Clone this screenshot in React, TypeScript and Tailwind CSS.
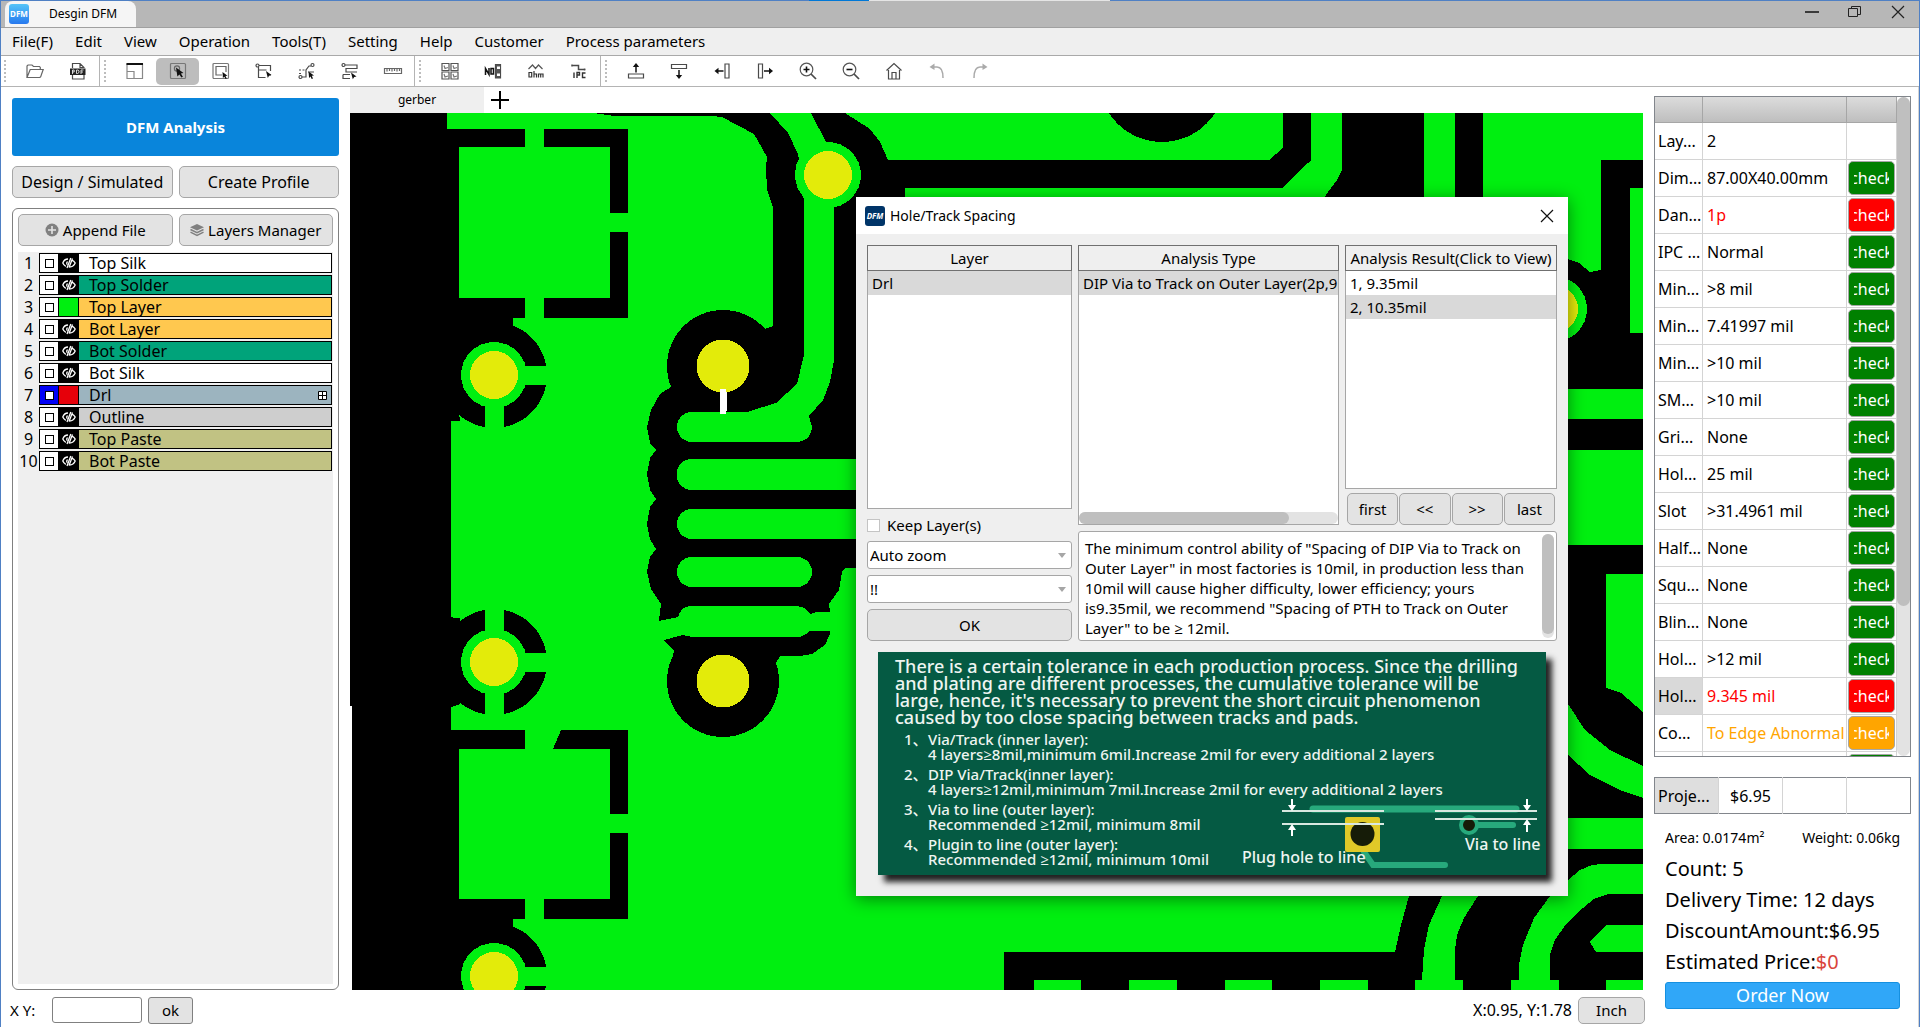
import React, { useState } from 'react';

type IconProps = { children: React.ReactNode };

const Icon: React.FC<IconProps> = ({ children }) => (
  <svg width="20" height="20" viewBox="0 0 20 20" fill="none" stroke="#4a4a4a" strokeWidth="1.2" aria-hidden="true">
    {children}
  </svg>
);

const toolGroups = [
  [
    { id: 'Open', icon: <Icon><path d="M2 16.500V5l1-1h4l1.500 1.500h6l.8 1v2M2 16.500l3.200-8h13l-2.500 7.200-.8.8z" stroke="#666" /></Icon> },
    {
      id: 'Export PDF',
      icon: (
        <Icon>
          <path d="M4.500 7V2.500h7.500l4 4V7M4.500 14v4h11.500v-4M12 2.500v4h4" />
          <rect x="2" y="7.500" width="15.500" height="6.500" fill="#222" stroke="none" />
          <path d="M4.500 13V9h1.700v2H4.500M8.500 9v3.500h1L11 11.500V10l-.8-1zM13 13V9h2.500M13 11h2" stroke="#fff" strokeWidth=".8" />
        </Icon>
      ),
    },
  ],
  [
    { id: 'Layout', icon: <Icon><path d="M2 17.500V3h15.500v14.500zM2 10.500h7v7" stroke="#888" /><path d="M1.500 3h16.500" stroke="#111" strokeWidth="2" /></Icon> },
    {
      id: 'Select',
      active: true,
      icon: (
        <Icon>
          <rect x="2.500" y="2.500" width="15" height="15" rx="1" stroke="#777" />
          <circle cx="9" cy="7.500" r="2.600" stroke="#666" />
          <path d="M8 6.500l7.500 5.500-2.600.5 2 3.200-1.500.8-2-3-2 2z" fill="#111" stroke="none" />
        </Icon>
      ),
    },
    {
      id: 'Area select',
      icon: (
        <Icon>
          <rect x="2" y="2.500" width="15.500" height="15" rx="1" stroke="#777" />
          <path d="M11 14H5V5.500h10V11" stroke="#666" />
          <path d="M11.500 11l5 3.800-2 .3 1.300 2.300-1.200.6-1.300-2.300-1.400 1.300z" fill="#111" stroke="none" />
        </Icon>
      ),
    },
    {
      id: 'Net select',
      icon: (
        <Icon>
          <circle cx="3.500" cy="4.500" r="1.500" />
          <path d="M5 4.500h11.500v5.500M15 14h2M4.500 6v3M4.500 9h8M4.500 9v7.500h7" />
          <path d="M12 10l5.500 4-2.300.5-1.400 2.500z" fill="#111" stroke="none" />
        </Icon>
      ),
    },
    {
      id: 'Trace',
      icon: (
        <Icon>
          <path d="M5 16h4V9l3-4h2M2 9h2M5.500 9h2M2 12.500h2M11 11h6" />
          <circle cx="15.500" cy="4" r="1.500" />
          <circle cx="3.500" cy="16" r="1.500" />
          <path d="M11.500 10.500l5.500 4-2.200.3 1.200 2.700-1.300.5-1.200-2.500-1.400 1.500z" fill="#111" stroke="none" />
        </Icon>
      ),
    },
    {
      id: 'Lines',
      icon: (
        <Icon>
          <circle cx="3.500" cy="4" r="1.500" />
          <path d="M5 4h12v3.500H6V11h11M3 13.500h7M3 13.500v4h7" />
          <path d="M11 11.500l5.500 4-2.300.4-1.400 2.300z" fill="#111" stroke="none" />
        </Icon>
      ),
    },
    { id: 'Ruler', icon: <Icon><path d="M1.500 7.500h17v5h-17zM4 8v2.500M6.500 8v2M9 8v2.500M11.500 8v2M14 8v2.500M16.500 8v2" stroke="#666" /></Icon> },
  ],
  [
    {
      id: 'Panelize',
      icon: (
        <Icon>
          <path d="M2 2.500h7v7H2zM11 2.500h7v7h-7zM2 11h7v7H2zM11 11h7v7h-7z" stroke="#555" />
          <path d="M4 4.500l1 3 3-1M13 4.500l1 3 3-1M4 13l1 3 3-1M13 13l1 3 3-1" stroke="#777" />
        </Icon>
      ),
    },
    {
      id: 'Numbering',
      icon: (
        <Icon>
          <path d="M2.500 14V7.500l3.500 6V7M8 7.500h2.500V13H8z" stroke="#111" strokeWidth="1.500" />
          <path d="M12.500 3.500h5v13.500h-5z" fill="#555" />
          <path d="M14 5.500h3v2.500h-3zM14 12.500h3V15h-3z" fill="#fff" stroke="none" />
        </Icon>
      ),
    },
    {
      id: 'Impedance',
      icon: (
        <Icon>
          <path d="M2.500 8l4-4 3 3.500 3-3.500 4 4" stroke="#555" />
          <path d="M3 11.500h2.700V16H3zM8 10v6.500M8 13h2.500v3.500M12.500 16.500V13h4.500v3.500M14.700 13v3.500" stroke="#333" />
        </Icon>
      ),
    },
    {
      id: 'IPC',
      icon: (
        <Icon>
          <path d="M2.500 4.500h7v4h7M3 3.500v2M15.500 7.500v2" strokeWidth="1.500" />
          <path d="M5 11.500V17M8 17v-5.500h2.500V14H8M16.500 12h-3v4.500h3" stroke="#333" strokeWidth="1.400" />
        </Icon>
      ),
    },
  ],
  [
    { id: 'Align top', icon: <Icon><path d="M2.500 13h15v4h-15z" /><path d="M10 11.500V4" stroke="#111" strokeWidth="1.500" /><path d="M10 2L6.800 6h6.400z" fill="#111" stroke="none" /></Icon> },
    { id: 'Align bottom', icon: <Icon><path d="M2.500 3.500h15v4h-15z" /><path d="M10 9v6" stroke="#111" strokeWidth="1.500" /><path d="M10 18l-3.200-4h6.400z" fill="#111" stroke="none" /></Icon> },
    { id: 'Align left', icon: <Icon><path d="M13 3h4v14h-4z" /><path d="M11.500 10H5" stroke="#111" strokeWidth="1.500" /><path d="M2.500 10L6.500 6.800v6.400z" fill="#111" stroke="none" /></Icon> },
    { id: 'Align right', icon: <Icon><path d="M3.500 3h4v14h-4z" /><path d="M9 10h6" stroke="#111" strokeWidth="1.500" /><path d="M18 10l-4-3.200v6.400z" fill="#111" stroke="none" /></Icon> },
    { id: 'Zoom in', icon: <Icon><circle cx="8.500" cy="8.500" r="6.300" stroke="#555" /><path d="M13 13l5 5" strokeWidth="1.700" /><path d="M5.500 8.500h6M8.500 5.500v6" stroke="#111" strokeWidth="1.600" /></Icon> },
    { id: 'Zoom out', icon: <Icon><circle cx="8.500" cy="8.500" r="6.300" stroke="#555" /><path d="M13 13l5 5" strokeWidth="1.700" /><path d="M5.500 8.500h6" stroke="#111" strokeWidth="1.600" /></Icon> },
    { id: 'Home', icon: <Icon><path d="M2.500 9.500L10 2.500l7.500 7M4.500 9v9h11V9M8 18v-6.500h4V18" /></Icon> },
    { id: 'Undo', icon: <Icon><path d="M5 6h5c3.500 0 6 3.500 6 11" stroke="#aaa" strokeWidth="1.500" /><path d="M2.500 6L7.500 2.500v6.500z" fill="#aaa" stroke="none" /></Icon> },
    { id: 'Redo', icon: <Icon><path d="M15 6h-5c-3.500 0-6 3.500-6 11" stroke="#aaa" strokeWidth="1.500" /><path d="M17.500 6L12.500 2.500v6.500z" fill="#aaa" stroke="none" /></Icon> },
  ],
];

const menus = ['File(F)', 'Edit', 'View', 'Operation', 'Tools(T)', 'Setting', 'Help', 'Customer', 'Process parameters'];

const layers = [
  { name: 'Top Silk', bg: 'bg-white', swatch: '' },
  { name: 'Top Solder', bg: 'bg-[#00a37a]', swatch: '' },
  { name: 'Top Layer', bg: 'bg-[#ffc84f]', swatch: 'bg-[#00ef10]' },
  { name: 'Bot Layer', bg: 'bg-[#ffc84f]', swatch: '' },
  { name: 'Bot Solder', bg: 'bg-[#00a37a]', swatch: '' },
  { name: 'Bot Silk', bg: 'bg-white', swatch: '' },
  { name: 'Drl', bg: 'bg-[#9cb4bf]', swatch: 'bg-[#e6000a]' },
  { name: 'Outline', bg: 'bg-[#cecece]', swatch: '' },
  { name: 'Top Paste', bg: 'bg-[#c1c283]', swatch: '' },
  { name: 'Bot Paste', bg: 'bg-[#c1c283]', swatch: '' },
];

const results = [
  { name: 'Lay...', value: '2', state: '' },
  { name: 'Dim...', value: '87.00X40.00mm', state: 'ok' },
  { name: 'Dan...', value: '1p', state: 'error' },
  { name: 'IPC ...', value: 'Normal', state: 'ok' },
  { name: 'Min...', value: '>8 mil', state: 'ok' },
  { name: 'Min...', value: '7.41997 mil', state: 'ok' },
  { name: 'Min...', value: '>10 mil', state: 'ok' },
  { name: 'SM...', value: '>10 mil', state: 'ok' },
  { name: 'Gri...', value: 'None', state: 'ok' },
  { name: 'Hol...', value: '25 mil', state: 'ok' },
  { name: 'Slot', value: '>31.4961 mil', state: 'ok' },
  { name: 'Half...', value: 'None', state: 'ok' },
  { name: 'Squ...', value: 'None', state: 'ok' },
  { name: 'Blin...', value: 'None', state: 'ok' },
  { name: 'Hol...', value: '>12 mil', state: 'ok' },
  { name: 'Hol...', value: '9.345 mil', state: 'error', selected: true },
  { name: 'Co...', value: 'To Edge Abnormal', state: 'warn' },
];

const stateBg: Record<string, string> = { ok: 'bg-[#008000]', error: 'bg-[#ff0000]', warn: 'bg-[#ffa500]' };
const stateText: Record<string, string> = { ok: 'text-black', error: 'text-[#ff0000]', warn: 'text-[#ffa500]' };

const btn = 'flex items-center justify-center rounded-[5px] border border-[#a6a6a6] bg-[#e3e3e3]';

const TitleBar = () => (
  <header className="flex h-[27px] items-stretch border-b border-[#a0a0a0] bg-[#b7b7b7]">
    <div className="ml-1 flex w-[131px] items-center rounded-t-lg bg-[#f5f5f5] pb-px pl-1">
      <span className="flex size-5 items-center justify-center rounded-[3px] bg-linear-to-b from-[#55c4f7] to-[#2878ee] text-[8px] font-bold text-white">DFM</span>
      <span className="ml-5 text-[12px]">Desgin DFM</span>
    </div>
    <div className="ml-auto flex pb-1">
      <button aria-label="Minimize" className="flex w-[43px] items-center justify-center">
        <svg width="14" height="14" stroke="#111" strokeWidth="1.500"><path d="M0 7h14" /></svg>
      </button>
      <button aria-label="Restore" className="flex w-[43px] items-center justify-center">
        <svg width="14" height="14" fill="none" stroke="#222"><path d="M.5 3.500h9v8h-9zM3.500 3.500v-2h9v8h-3" /></svg>
      </button>
      <button aria-label="Close" className="flex w-[43px] items-center justify-center">
        <svg width="14" height="14" stroke="#222" strokeWidth="1.200"><path d="M1 1l12 12M13 1L1 13" /></svg>
      </button>
    </div>
  </header>
);

const Toolbar = () => (
  <div className="flex h-[31px] border-b border-[#b4b4b4] bg-white">
    {toolGroups.map((group, i) => (
      <div key={i} className={`flex items-center ${i === 0 ? 'pl-[3px]' : 'pl-1'} ${i < 3 ? 'border-r border-[#b4b4b4]' : ''}`}>
        <span className="mr-[7px] h-[22px] border-l-2 border-dotted border-[#bdbdbd]" />
        {group.map((tool) => (
          <button
            key={tool.id}
            aria-label={tool.id}
            className={`flex h-[27px] w-[43px] items-center justify-center rounded-[5px] ${'active' in tool ? 'bg-[#bdbdbd]' : ''}`}
          >
            {tool.icon}
          </button>
        ))}
      </div>
    ))}
  </div>
);

const HiddenEye = () => (
  <svg width="14" height="12" viewBox="0 0 14 12" fill="none" stroke="#fff" strokeWidth="1.300" aria-hidden="true">
    <path d="M6 2C3.500 2 1.500 4 .8 6c.6 1.400 1.700 2.700 3 3.300M9.500 2.800C11.300 3.500 12.600 4.700 13.200 6c-.9 2-3 4-5.700 4M5.500 4.500c-1 1-1 2.300-.3 3.200M8.800 1L5 11M10.500 1.500L7 10.500" />
  </svg>
);

const LayerPanel = () => {
  const [active, setActive] = useState(6);

  return (
    <aside className="flex w-[349px] shrink-0 flex-col px-[11px] pt-[11px] text-[16px]">
      <button className="h-[58px] rounded-[3px] bg-[#0985db] text-[15px] font-bold text-white">DFM Analysis</button>
      <div className="mt-[10px] grid grid-cols-2 gap-[6px]">
        <button className={`${btn} h-8 whitespace-nowrap`}>Design / Simulated</button>
        <button className={`${btn} h-8 whitespace-nowrap`}>Create Profile</button>
      </div>
      <div className="mt-[10px] flex flex-1 flex-col rounded-md border border-[#808080] p-[5px]">
        <div className="grid grid-cols-2 gap-[6px] text-[15px]">
          <button className={`${btn} h-8 gap-1`}>
            <svg width="14" height="14" viewBox="0 0 14 14"><circle cx="7" cy="7" r="6.500" fill="#808080" /><path d="M7 3v8M3 7h8" stroke="#e3e3e3" strokeWidth="1.600" /></svg>
            Append File
          </button>
          <button className={`${btn} h-8 gap-1`}>
            <svg width="14" height="14" viewBox="0 0 14 14"><path d="M7 1l7 3.300-7 3.300-7-3.300z" fill="#808080" /><path d="M.5 6.500L7 9.700l6.500-3.200M.5 9.200L7 12.400l6.500-3.200" fill="none" stroke="#808080" strokeWidth="1.500" /></svg>
            Layers Manager
          </button>
        </div>
        <ul className="mt-[6px] flex-1 space-y-[2px] bg-[#efefef] pt-px pr-px">
          {layers.map((layer, i) => (
            <li key={layer.name} className="flex h-5 items-center" onClick={() => setActive(i)}>
              <span className="flex w-[21px] justify-center">{i + 1}</span>
              <div className={`flex h-5 flex-1 items-stretch border border-black ${layer.bg}`}>
                <span className={`flex w-[19px] items-center justify-center border-r border-black ${active === i ? 'bg-[#0000f5]' : 'bg-white'}`}>
                  <input
                    type="checkbox"
                    aria-label={layer.name}
                    className="size-[9px] appearance-none border border-black bg-white"
                  />
                </span>
                <span className={`flex w-5 items-center justify-center border-r border-black ${layer.swatch || 'bg-black'}`}>
                  {!layer.swatch && <HiddenEye />}
                </span>
                <span className="flex flex-1 items-center pl-[10px]">{layer.name}</span>
                {active === i && (
                  <svg width="9" height="9" className="mr-1 self-center" fill="#fff" stroke="#000"><path d="M.5.5h8v8h-8zM4.500.5v8M.5 4.500h8" /></svg>
                )}
              </div>
            </li>
          ))}
        </ul>
      </div>
    </aside>
  );
};

// thermal relief via: clearance ring, pad and drill, spokes to the right and up/down
const ThermalVia: React.FC<{ y: number; up?: boolean }> = ({ y, up }) => (
  <g>
    <circle cx="494" cy={y} r="53" fill="#000" />
    <circle cx="494" cy={y} r="33" />
    <rect x="485" y={y} width="19" height="56" />
    {up && <rect x="485" y={y - 56} width="19" height="56" />}
    <rect x="504" y={y - 9} width="44" height="19" />
    <circle cx="494" cy={y} r="24" fill="#e3eb0a" />
  </g>
);

const BoardView = () => (
  <svg
    className="absolute inset-0 size-full"
    viewBox="350 113 1293 877"
    preserveAspectRatio="xMinYMin slice"
    fill="#00ef10"
    shapeRendering="crispEdges"
    role="img"
    aria-label="Board view"
  >
    <rect x="350" y="113" width="1293" height="877" />
    <g fill="#000">
      <path d="M350 113H447V129H525V147H459V298H525V318H513L512 340L451 380V421L460 417V620L451 618V421V707L460 704V620H451V730H525V749H459V899H525V919H513L512 935L451 990H350Z" />
    </g>
    <rect x="451" y="421" width="12" height="197" />
    <path d="M451 707H470V730H451Z" />
    <g fill="#000">
      <path d="M544 129H628V213H610V147H544ZM610 232H628V318H544V298H610Z" />
      <path d="M561 730H628V814H610V749H553ZM610 833H628V919H544V899H610Z" />
    </g>
    <ThermalVia y={375} />
    <ThermalVia y={662} up />
    <ThermalVia y={976} />
    <path fill="#000" d="M350 113H447V421H451V618H447V707H451V990H350Z" />
    <path fill="#000" d="M447 340H459V418L451 421H447ZM447 620H460L451 617H447ZM447 620H455V704H447Z" />
    <circle cx="494" cy="662" r="33" />
    <circle cx="494" cy="662" r="24" fill="#e3eb0a" />
    <circle cx="494" cy="375" r="33" />
    <circle cx="494" cy="375" r="24" fill="#e3eb0a" />

    {/* clearance around the meander and the two plug holes */}
    <path
      fill="#000"
      d="M593 113H845L870 129L880 142L888 160H1269L1283 148V113H1311V161L1304 166L1282 188H905V568H845L842 572L839 590L829 604L830 612V634L825 645L812 654L800 656H780L776 663L760 690H690L673 655L674 651L664 640L659 621L660 612L661 604L651 589L647 572L650 557L656 549L650 539L647 524L650 507L656 499L650 490L647 474L650 458L656 450L650 443L647 427L651 410L660 394L671 387L723 360L764 329L773 326V207L767 190L766 167L767 157L754 134L722 117L712 116H614Z"
    />
    <circle cx="723" cy="366" r="56" fill="#000" />
    <circle cx="723" cy="681" r="56" fill="#000" />
    <path d="M770 113H811L826 142L834 200V360L830 382L823 400L809 416L812 427Q811 440 798 442H692A15 15 0 0 1 692 412H747L776 403L797 384L804 355V200L796 165L799 159L798 154L788 133Z" />
    <circle cx="828" cy="175" r="33" />
    <circle cx="828" cy="175" r="24" fill="#e3eb0a" />
    <path d="M920 459H692A15 15 0 0 0 692 490H920ZM920 509H692A15 15 0 0 0 692 539H920ZM692 557H797A15 15 0 0 1 797 587H692A15 15 0 0 1 692 557Z" />
    <path d="M659 621L678 617Q681 606 692 606H797Q806 607 810 614L816 612H831V631H809Q804 637 797 637H692L683 635L664 640L655 630Z" />
    <circle cx="723" cy="366" r="26.500" fill="#e3eb0a" />
    <circle cx="723" cy="681" r="26.500" fill="#e3eb0a" />
    <path d="M723 392V411" stroke="#fff" strokeWidth="7" strokeLinecap="round" />

    {/* top right tracks */}
    <g fill="#000">
      <circle cx="1162" cy="79" r="63" />
      <path d="M1342 113H1424V230H1300L1337 180L1342 170ZM1455 113H1483V230H1455Z" />
      <path d="M1601 160H1643V188H1630V333H1643V389H1540V257L1568 259L1579 263L1590 272L1601 270Z" />
      <path d="M1540 419H1643V450H1540ZM1540 545H1643V574H1606V688L1621 693L1643 712V766L1610 750L1585 730L1568 704L1540 650Z" />
      <path d="M1540 730L1568 755L1590 775L1620 790L1643 798V818H1540Z" />
    </g>
    <circle cx="1554" cy="309" r="33" />
    <circle cx="1554" cy="309" r="24" fill="#e3eb0a" />

    {/* bottom right fan-out */}
    <g fill="#000">
      <path d="M1004 952H1395L1401 925L1409 896V870H1460L1442 896L1429 925L1424 950L1422 980V990H1004Z" />
      <path d="M1478 896L1500 849H1643V864H1602L1592 865L1580 870L1568 880L1550 896L1534 918L1523 945L1519 965V990H1455V950L1457 935L1464 918Z" />
      <path d="M1550 990V955L1555 940L1564 927L1578 912L1594 899L1608 894H1643V925H1607L1598 933L1590 942L1596 952H1643V990Z" />
    </g>
    <path d="M1034 980H1081V990H1034ZM1129 980H1177V990H1129ZM1225 980H1272V990H1225ZM1320 980H1368V990H1320ZM1415 980H1463V990H1415ZM1511 980H1559V990H1511ZM1606 980H1643V990H1606Z" />
    <rect x="350" y="706" width="2" height="284" fill="#fff" />
  </svg>
);

const ToleranceCard = () => (
  <div className="relative mx-[11px] mt-[11px] h-[223px] bg-[#055a43] px-[17px] pt-[6px] font-medium text-[#eef5f1] shadow-[6px_7px_6px_#222]">
    <p className="text-[18px] leading-[17px] whitespace-nowrap">
      There is a certain tolerance in each production process. Since the drilling<br />
      and plating are different processes, the cumulative tolerance will be<br />
      large, hence, it's necessary to prevent the short circuit phenomenon<br />
      caused by too close spacing between tracks and pads.
    </p>
    <ol className="mt-[6px] space-y-[5px] pl-[9px] text-[15px] leading-[15px]">
      {[
        ['Via/Track (inner layer):', '4 layers≥8mil,minimum 6mil.Increase 2mil for every additional 2 layers'],
        ['DIP Via/Track(inner layer):', '4 layers≥12mil,minimum 7mil.Increase 2mil for every additional 2 layers'],
        ['Via to line (outer layer):', 'Recommended ≥12mil, minimum 8mil'],
        ['Plugin to line (outer layer):', 'Recommended ≥12mil, minimum 10mil'],
      ].map(([title, rule], i) => (
        <li key={title} className="flex whitespace-nowrap">
          <span className="w-6">{i + 1}、</span>
          <span>{title}<br />{rule}</span>
        </li>
      ))}
    </ol>
    <svg className="absolute right-0 bottom-0" width="310" height="80" viewBox="1237 795 310 80" aria-hidden="true">
      <path d="M1314 809H1517" stroke="#27a97c" strokeWidth="7" strokeLinecap="round" />
      <path d="M1365 852L1374 865H1446" stroke="#27a97c" strokeWidth="6" fill="none" strokeLinecap="round" />
      <path d="M1472 825H1514" stroke="#27a97c" strokeWidth="6" strokeLinecap="round" />
      <rect x="1346" y="817" width="35" height="35" rx="2" fill="#e0c928" />
      <circle cx="1363.500" cy="834" r="12" fill="#161c08" />
      <circle cx="1470" cy="825" r="8" fill="#161c08" stroke="#27a97c" strokeWidth="4" />
      <path d="M1283 811H1385M1283 824H1385M1436 811H1538M1436 819H1538" stroke="#d9e8e0" strokeWidth="2" />
      <path d="M1293 799V806M1293 830V836M1528 799V806M1528 824V832" stroke="#fff" strokeWidth="2" />
      <path d="M1293 811l-4-6h8zM1293 824l-4 6h8zM1528 811l-4-6h8zM1528 819l-4 6h8z" fill="#fff" />
      <text x="1243" y="863" fill="#eef5f1" fontSize="16">Plug hole to line</text>
      <text x="1466" y="850" fill="#eef5f1" fontSize="16">Via to line</text>
    </svg>
  </div>
);

const ComboBox: React.FC<{ label: string; options: string[] }> = ({ label, options }) => (
  <div className="relative mt-[6px]">
    <select aria-label={label} className="h-7 w-full appearance-none rounded-[3px] border border-[#a6a6a6] bg-white pl-[2px]">
      {options.map((o) => <option key={o}>{o}</option>)}
    </select>
    <svg width="8" height="5" className="absolute top-3 right-[6px]"><path d="M0 0h8L4 5z" fill="#a6a6a6" /></svg>
  </div>
);

const listHead = 'flex h-[26px] items-center justify-center border border-[#707070] whitespace-nowrap';

const SpacingDialog = () => {
  const [picked, setPicked] = useState(1);

  return (
    <section
      role="dialog"
      aria-label="Hole/Track Spacing"
      className="absolute top-[84px] right-[75px] h-[699px] w-[712px] bg-[#efefef] shadow-[0_3px_16px_rgba(0,0,0,0.45)]"
    >
      <div className="flex h-[37px] items-center bg-white pr-[14px] pl-[9px]">
        <span className="flex size-5 items-center justify-center rounded-[3px] bg-[#003468] text-[8px] font-bold text-white italic">DFM</span>
        <h2 className="ml-[5px] text-[14px]">Hole/Track Spacing</h2>
        <button aria-label="Close dialog" className="ml-auto">
          <svg width="14" height="14" stroke="#111" strokeWidth="1.200"><path d="M1 1l12 12M13 1L1 13" /></svg>
        </button>
      </div>
      <div className="flex gap-[6px] px-[11px] pt-[11px]">
        <div className="flex w-[205px] flex-col">
          <div className={listHead}>Layer</div>
          <ul className="h-[238px] border border-t-0 border-[#a6a6a6] bg-white">
            <li className="h-6 bg-[#d9d9d9] pl-1 leading-6">Drl</li>
          </ul>
          <label className="mt-1 flex h-6 items-center gap-[7px]">
            <input type="checkbox" className="size-[13px] appearance-none border border-[#c4c4c4] bg-white" />
            Keep Layer(s)
          </label>
          <div className="-mt-[2px]">
            <ComboBox label="Zoom mode" options={['Auto zoom']} />
            <ComboBox label="Severity" options={['!!']} />
          </div>
          <button className={`${btn} mt-[6px] h-8`}>OK</button>
        </div>
        <div className="flex min-w-0 flex-1 flex-col">
          <div className="flex gap-[6px]">
            <div className="flex h-[280px] w-[261px] flex-col">
              <div className={listHead}>Analysis Type</div>
              <div className="flex flex-1 flex-col overflow-hidden border border-t-0 border-[#a6a6a6] bg-white">
                <div className="h-6 bg-[#d9d9d9] pl-1 leading-6 whitespace-nowrap">DIP Via to Track on Outer Layer(2p,9</div>
                <div className="mt-auto h-3 rounded-full bg-[#e3e3e3]">
                  <div className="h-3 w-[210px] rounded-full bg-[#bfbfbf]" />
                </div>
              </div>
            </div>
            <div className="min-w-0 flex-1">
              <div className={listHead}>Analysis Result(Click to View)</div>
              <ul className="h-[218px] border border-t-0 border-[#a6a6a6] bg-white">
                {['1, 9.35mil', '2, 10.35mil'].map((r, i) => (
                  <li key={r} onClick={() => setPicked(i)} className={`h-6 pl-1 leading-6 ${picked === i ? 'bg-[#d9d9d9]' : ''}`}>{r}</li>
                ))}
              </ul>
              <div className="mt-1 grid grid-cols-4 gap-px px-[2px]">
                {['first', '<<', '>>', 'last'].map((b) => <button key={b} className={`${btn} h-8`}>{b}</button>)}
              </div>
            </div>
          </div>
          <div className="relative mt-[6px]">
            <textarea
              readOnly
              aria-label="Suggestion"
              className="block h-[110px] w-full resize-none overflow-hidden rounded-[3px] border border-[#a6a6a6] bg-white py-[6px] pr-4 pl-[6px] leading-5"
              value={'The minimum control ability of "Spacing of DIP Via to Track on Outer Layer" in most factories is 10mil, in production less than 10mil will cause higher difficulty, lower efficiency; yours is9.35mil, we recommend "Spacing of PTH to Track on Outer Layer" to be ≥ 12mil.'}
            />
            <div className="absolute top-[3px] right-[3px] h-[104px] w-3 rounded-full bg-[#e3e3e3]">
              <div className="h-[100px] rounded-full bg-[#bfbfbf]" />
            </div>
          </div>
        </div>
      </div>
      <div className="px-[11px]">
        <ToleranceCard />
      </div>
    </section>
  );
};

const Workspace = () => (
  <main className="flex min-w-0 flex-1 flex-col">
    <div className="flex h-[26px] items-center">
      <button className="h-full w-[134px] bg-[#efefef] text-[12px]">gerber</button>
      <button aria-label="New tab" className="ml-[7px]">
        <svg width="18" height="18" stroke="#000" strokeWidth="2"><path d="M9 0v18M0 9h18" /></svg>
      </button>
    </div>
    <div className="relative flex-1">
      <BoardView />
      <SpacingDialog />
    </div>
  </main>
);

const StatusBar = () => (
  <footer className="flex h-[37px] items-center pt-[3px] pl-[9px]">
    <label htmlFor="xy" className="w-[42px]">X Y:</label>
    <input id="xy" className="h-[26px] w-[90px] rounded-[3px] border border-[#808080] px-1" />
    <button className="ml-[6px] h-[27px] w-[45px] rounded-[3px] border border-[#808080] bg-[#e3e3e3]">ok</button>
    <span className="mr-[6px] ml-auto text-[16px]">X:0.95, Y:1.78</span>
    <button className={`${btn} -mr-[2px] h-[27px] w-[67px]`}>Inch</button>
  </footer>
);

const ResultPanel = () => (
  <aside className="flex w-[276px] shrink-0 flex-col border-r border-[#d4d4d4] pt-[9px] pr-[7px] pl-[11px] text-[16px]">
    <div className="flex h-[661px] overflow-hidden border border-[#82868c]">
      <div className="min-w-0 flex-1">
        <table className="w-full table-fixed border-separate border-spacing-0">
          <colgroup>
            <col className="w-[48px]" />
            <col />
            <col className="w-[50px]" />
          </colgroup>
          <thead>
            <tr className="h-[26px] bg-linear-to-b from-[#dcdcdc] to-[#bdbdbd]">
              {['Item', 'Result', 'Check'].map((h) => <th key={h} aria-label={h} className="border-r border-b border-[#a6a6a6]" />)}
            </tr>
          </thead>
          <tbody>
            {results.map((r, i) => (
              <tr key={i} className="h-[37px]">
                <td className={`border-r border-b border-[#d4d4d4] p-0 pl-[3px] whitespace-nowrap ${r.selected ? 'bg-[#d9d9d9]' : ''}`}>{r.name}</td>
                <td className={`border-r border-b border-[#d4d4d4] p-0 pl-1 whitespace-nowrap ${stateText[r.state] || ''}`}>{r.value}</td>
                <td className="border-r border-b border-[#d4d4d4] p-px">
                  {r.state && (
                    <button className={`h-[34px] w-full rounded-[5px] border border-[#a6a6a6] px-[5px] text-white ${stateBg[r.state]}`}>
                      <span className="flex justify-center overflow-hidden">check</span>
                    </button>
                  )}
                </td>
              </tr>
            ))}
            <tr className="h-[37px]">
              <td className="border-r border-[#d4d4d4]" />
              <td className="border-r border-[#d4d4d4]" />
              <td className="border-r border-[#d4d4d4] p-px">
                <button aria-label="check" className="block h-[34px] w-full rounded-[5px] border border-[#a6a6a6] bg-[#008000]" />
              </td>
            </tr>
          </tbody>
        </table>
      </div>
      <div className="w-[13px] rounded-full bg-[#e3e3e3]">
        <div className="h-[509px] rounded-full bg-[#bfbfbf]" />
      </div>
    </div>

    <table className="mt-5 h-[37px] w-full table-fixed border-collapse border border-[#82868c]">
      <tbody>
        <tr>
          <td className="border-r border-[#d4d4d4] bg-[#dedede] p-0 pl-[3px]">Proje...</td>
          <td className="border-r border-[#d4d4d4] p-0 text-center">$6.95</td>
          <td className="border-r border-[#d4d4d4]" />
          <td />
        </tr>
      </tbody>
    </table>

    <div className="px-[11px] text-[20px] leading-[31px]">
      <div className="mt-2 flex justify-between text-[14px]">
        <span>Area: 0.0174m²</span>
        <span>Weight: 0.06kg</span>
      </div>
      <p>Count: 5</p>
      <p>Delivery Time: 12 days</p>
      <p>DiscountAmount:$6.95</p>
      <p>Estimated Price:<span className="text-[#d9453b]">$0</span></p>
      <button className="mt-[5px] flex h-[27px] w-full items-center justify-center rounded-[3px] border border-[#1590e0] bg-[#30a7f8] text-[18px] text-white">Order Now</button>
    </div>
  </aside>
);

export default function App() {
  return (
    <div className="flex h-screen flex-col overflow-hidden border-x border-[#4f80c4] bg-white font-['Noto_Sans','Open_Sans','DejaVu_Sans','Noto_Sans_CJK_SC',sans-serif] text-[15px] text-black">
      <div className="flex h-px bg-[#4f80c4]">
        <span className="ml-[808px] w-[60px] bg-[#0078d7]" />
        <span className="w-[241px] bg-[#e5e5e5]" />
      </div>
      <TitleBar />
      <nav className="flex h-[28px] items-center gap-[22px] border-b border-[#a9a9a9] bg-[#efefef] pb-px pl-[11px]">
        {menus.map((m) => <button key={m}>{m}</button>)}
      </nav>
      <Toolbar />
      <div className="flex min-h-0 flex-1">
        <div className="flex min-w-0 flex-1 flex-col">
          <div className="flex flex-1">
            <LayerPanel />
            <Workspace />
          </div>
          <StatusBar />
        </div>
        <ResultPanel />
      </div>
    </div>
  );
}
